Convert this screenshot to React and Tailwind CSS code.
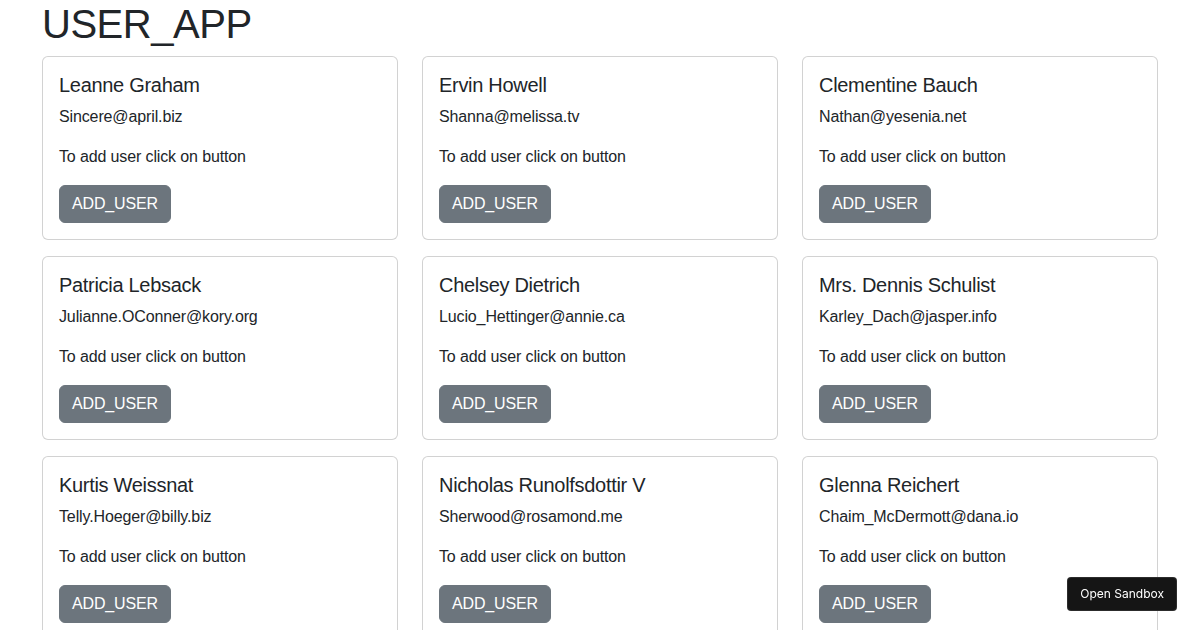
const users = [
  { name: "Leanne Graham", email: "Sincere@april.biz" },
  { name: "Ervin Howell", email: "Shanna@melissa.tv" },
  { name: "Clementine Bauch", email: "Nathan@yesenia.net" },
  { name: "Patricia Lebsack", email: "Julianne.OConner@kory.org" },
  { name: "Chelsey Dietrich", email: "Lucio_Hettinger@annie.ca" },
  { name: "Mrs. Dennis Schulist", email: "Karley_Dach@jasper.info" },
  { name: "Kurtis Weissnat", email: "Telly.Hoeger@billy.biz" },
  { name: "Nicholas Runolfsdottir V", email: "Sherwood@rosamond.me" },
  { name: "Glenna Reichert", email: "Chaim_McDermott@dana.io" },
  { name: "Clementina DuBuque", email: "Rey.Padberg@karina.biz" },
]

const UserCard = ({ user }) => {
  return (
    <div className="border border-black/[0.175] rounded-md bg-white p-4">
      <h5 className="text-xl leading-6 mb-2 tracking-[-0.015em]">{user.name}</h5>
      <p className="text-base leading-6 mb-4 tracking-[-0.008em]">{user.email}</p>
      <p className="text-base leading-6 mb-4 tracking-[-0.008em]">To add user click on button</p>
      <button className="bg-[#6c757d] text-white text-base leading-6 px-3 py-1.5 border border-[#6c757d] rounded-md tracking-[-0.01em]">
        ADD_USER
      </button>
    </div>
  )
}

const App = () => {
  return (
    <div
      className="min-h-screen bg-white text-[#212529]"
      style={{ fontFamily: '"Liberation Sans", Arial, sans-serif' }}
    >
      <div className="max-w-[1140px] mx-auto px-3">
        <h1 className="text-[40px] leading-[48px] mb-2 tracking-[-0.012em]">USER_APP</h1>

        {/* Cards */}
        <div className="grid grid-cols-3 gap-x-6 gap-y-4">
          {users.map((user) => (
            <UserCard key={user.email} user={user} />
          ))}
        </div>
      </div>

      {/* Sandbox badge */}
      <button
        className="fixed right-[23px] bottom-[19px] bg-[#151515] text-white text-[12px] leading-4 px-3 py-[8px] rounded-[4px] border border-white/10"
        style={{ fontFamily: "Inter, sans-serif" }}
      >
        Open Sandbox
      </button>
    </div>
  )
}

export default App
